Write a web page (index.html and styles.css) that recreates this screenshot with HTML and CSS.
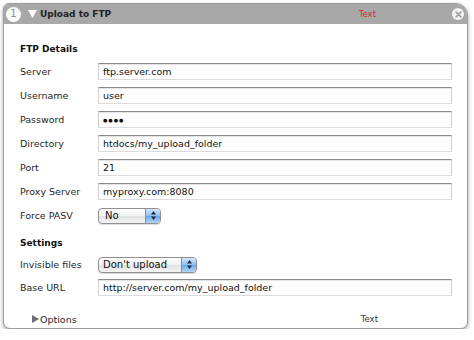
FILE: index.html
```html
<!DOCTYPE html>
<html>
<head>
<meta charset="utf-8">
<link rel="stylesheet" href="styles.css">
</head>
<body>
<div class="panel">
  <div class="header">
    <span class="step">1</span>
    <svg class="disclose" width="9" height="8" viewBox="0 0 9 8"><path d="M0 0 H9 L4.5 8 Z" fill="#fff"/></svg>
    <span class="title">Upload to FTP</span>
    <span class="red-text">Text</span>
    <span class="close"><svg width="7" height="7" viewBox="0 0 7 7"><path d="M1 1 L6 6 M6 1 L1 6" stroke="#9a9a9a" stroke-width="1.6" stroke-linecap="round"/></svg></span>
  </div>
  <div class="content">
    <div class="section">
      <div class="heading">FTP Details</div>
      <div class="row"><label>Server</label><div class="field">ftp.server.com</div></div>
      <div class="row"><label>Username</label><div class="field">user</div></div>
      <div class="row"><label>Password</label><div class="field dots">●●●●</div></div>
      <div class="row"><label>Directory</label><div class="field">htdocs/my_upload_folder</div></div>
      <div class="row"><label>Port</label><div class="field">21</div></div>
      <div class="row"><label>Proxy Server</label><div class="field">myproxy.com:8080</div></div>
      <div class="row"><label>Force PASV</label>
        <div class="popup small"><span class="pv">No</span><span class="arrows"><svg width="5" height="9" viewBox="0 0 5 9"><path d="M2.5 0 L5 3.4 H0 Z M2.5 9 L5 5.6 H0 Z" fill="#1d2b4a"/></svg></span></div>
      </div>
    </div>
    <div class="section settings">
      <div class="heading">Settings</div>
      <div class="row"><label>Invisible files</label>
        <div class="popup wide"><span class="pv">Don't upload</span><span class="arrows"><svg width="5" height="9" viewBox="0 0 5 9"><path d="M2.5 0 L5 3.4 H0 Z M2.5 9 L5 5.6 H0 Z" fill="#1d2b4a"/></svg></span></div>
      </div>
      <div class="row"><label>Base URL</label><div class="field">http://server.com/my_upload_folder</div></div>
    </div>
    <div class="footer">
      <svg class="opt-tri" width="7" height="8" viewBox="0 0 7 8"><path d="M0 0 L7 4 L0 8 Z" fill="#6e6e6e"/></svg>
      <span class="opt">Options</span>
      <span class="foot-text">Text</span>
    </div>
  </div>
</div>
</body>
</html>
```

FILE: styles.css
```css
html, body {
  margin: 0;
  padding: 0;
  background: #fff;
}
body {
  padding: 3px 6px 0 3px;
  font-family: "DejaVu Sans", sans-serif;
  font-size: 9.5px;
  color: #262626;
}
.panel {
  border: 1px solid #9c9c9c;
  border-radius: 6px 12px 7px 7px;
  box-shadow: 0 2px 4px rgba(0,0,0,0.35);
  overflow: hidden;
  background: #fff;
}
.header {
  height: 20px;
  background: #a8a8a8;
  display: flex;
  align-items: center;
  padding: 0 2px 0 2px;
}
.step {
  width: 15px;
  height: 15px;
  border-radius: 50%;
  background: #fafafa;
  color: #8d8d8d;
  font-size: 10px;
  display: flex;
  align-items: center;
  justify-content: center;
  line-height: 1;
}
.disclose {
  margin-left: 7px;
}
.title {
  margin-left: 3px;
  font-weight: bold;
  font-size: 9px;
  color: #222;
}
.red-text {
  margin-left: auto;
  margin-right: 76px;
  color: #d03030;
  font-size: 8.5px;
}
.close {
  width: 12px;
  height: 12px;
  border-radius: 50%;
  background: #f4f4f4;
  display: flex;
  align-items: center;
  justify-content: center;
  margin-right: 1px;
}
.content {
  padding: 18px 15px 2px 16px;
}
.section {
  display: flex;
  flex-direction: column;
  gap: 7px;
}
.settings {
  margin-top: 12px;
  gap: 6px;
}
.heading {
  font-weight: bold;
  font-size: 9px;
  height: 14px;
  line-height: 14px;
  color: #111;
}
.row {
  display: grid;
  grid-template-columns: 78px 1fr;
  align-items: center;
  height: 17px;
}
.row label {
  color: #262626;
}
.field {
  height: 17px;
  box-sizing: border-box;
  border: 1px solid #cdcdcd;
  border-top-color: #8a8a8a;
  border-bottom-color: #dcdcdc;
  box-shadow: inset 0 1px 0 #e4e4e4;
  padding: 0 4px;
  line-height: 15px;
  color: #111;
  white-space: nowrap;
  overflow: hidden;
}
.dots {
  font-size: 5px;
  letter-spacing: 1px;
  line-height: 16px;
}
.popup {
  height: 16px;
  box-sizing: border-box;
  border: 1px solid #8f8f8f;
  border-radius: 4px;
  display: flex;
  align-items: stretch;
  overflow: hidden;
  background: linear-gradient(#ffffff, #f0f0f0 50%, #e2e2e2 51%, #f4f4f4);
  box-shadow: 0 1px 1px rgba(0,0,0,0.15);
}
.popup.small { width: 63px; }
.popup.wide { width: 99px; }
.pv {
  flex: 1;
  padding-left: 6px;
  line-height: 14px;
  font-size: 10px;
  color: #111;
}
.popup.wide .pv { padding-left: 4px; }
.arrows {
  width: 14px;
  background: linear-gradient(#d6e8fb, #8cbcef 50%, #6aa6e8 51%, #b4d6f8);
  border-left: 1px solid #7790b8;
  display: flex;
  align-items: center;
  justify-content: center;
}
.footer {
  margin-top: 16px;
  height: 14px;
  display: flex;
  align-items: center;
  padding-left: 12px;
}
.opt {
  margin-left: 1px;
  font-size: 9.5px;
  color: #262626;
}
.foot-text {
  margin-left: auto;
  margin-right: 74px;
  font-size: 8.5px;
  color: #333;
}
```
